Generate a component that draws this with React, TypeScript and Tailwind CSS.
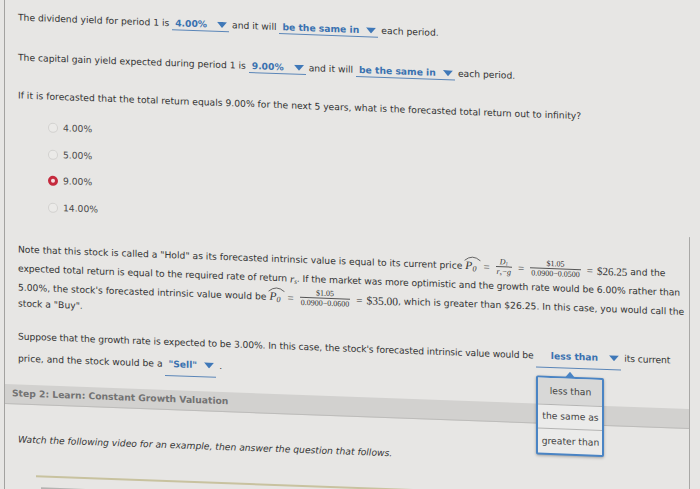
import React from 'react';

const serif = "font-['Liberation_Serif',serif]";

function Caret() {
  return (
    <svg width="10" height="6" viewBox="0 0 10 6" className="shrink-0">
      <path d="M0 0h10L5 6z" fill="#3f78b8" />
    </svg>
  );
}

function Dropdown({
  value,
  w,
  center,
  children,
}: {
  value: string;
  w: string;
  center?: boolean;
  children?: React.ReactNode;
}) {
  return (
    <span
      className={`relative inline-flex items-center ${w} border-b border-[#5b86b8] pl-[3px] pr-[2px] font-bold tracking-normal text-[#3a72b0]`}
    >
      <span className={center ? 'flex-1 text-center' : 'flex-1'}>{value}</span>
      <Caret />
      {children}
    </span>
  );
}

function Radio({ label, checked }: { label: string; checked?: boolean }) {
  return (
    <div className="flex h-[12px] items-center pl-[30px]">
      <span
        className={
          checked
            ? 'size-[10px] rounded-full border-[3px] border-[#c52a3d] bg-[#f3dde0]'
            : 'size-[10px] rounded-full border border-[#d2d1cf] bg-[#ebeae8]'
        }
      />
      <span className="ml-[5px] text-[#4a4a4a]">{label}</span>
    </div>
  );
}

function PHat() {
  return (
    <span className={`relative mx-[3px] inline-block ${serif} text-[11.5px] italic leading-none text-[#333]`}>
      P<sub className="text-[8px]">0</sub>
      <svg className="absolute -top-[5px] -left-[1px]" width="17" height="6" viewBox="0 0 17 6">
        <path d="M0.5 5.5 Q8.5 -1.5 16.5 5.5" stroke="#444" fill="none" strokeWidth="0.8" />
      </svg>
    </span>
  );
}

function Frac({ num, den }: { num: React.ReactNode; den: React.ReactNode }) {
  return (
    <span className={`mx-[2px] inline-flex flex-col items-center align-middle ${serif} text-[8px] leading-[9px] text-[#333]`}>
      <span className="px-[1px]">{num}</span>
      <span className="border-t border-[#555] px-[1px]">{den}</span>
    </span>
  );
}

function Eq() {
  return <span className={`${serif} mx-[4px] text-[11px]`}>=</span>;
}

function Popup() {
  return (
    <span className="absolute top-[calc(100%+9px)] left-0 z-10 flex w-[68px] flex-col rounded-[2px] border-2 border-[#4a84c4] bg-[#ebebea] text-center font-normal text-[#444] shadow-[0_1px_3px_rgba(0,0,0,0.3)]">
      <svg className="absolute -top-[7px] left-[27px]" width="10" height="6" viewBox="0 0 10 6">
        <path d="M0 6L5 0l5 6z" fill="#4a84c4" />
      </svg>
      <span className="flex h-[26px] items-center justify-center bg-[#d8d8d7]">less than</span>
      <span className="flex h-[24px] items-center justify-center border-t border-[#b4b4b3]">the same as</span>
      <span className="flex h-[25px] items-center justify-center border-t border-[#b4b4b3]">greater than</span>
    </span>
  );
}

export default function App() {
  return (
    <div className="h-[489px] w-[700px] overflow-hidden bg-[#e7e6e4] pl-[4px] font-['DejaVu_Sans',sans-serif] text-[9.2px] leading-[12px] text-[#363636]">
      <div className="w-[686px] origin-top-left skew-y-[2.1deg] border-l border-[#a3a2a0] pt-[11px]">
        <div className="h-[12px] whitespace-nowrap pl-[13px]">
          The dividend yield for period 1 is <Dropdown value="4.00%" w="w-[57px]" /> and it will{' '}
          <Dropdown value="be the same in" w="w-[99px]" /> each period.
        </div>
        <div className="mt-[28px] h-[12px] whitespace-nowrap pl-[13px]">
          The capital gain yield expected during period 1 is <Dropdown value="9.00%" w="w-[57px]" /> and it will{' '}
          <Dropdown value="be the same in" w="w-[99px]" /> each period.
        </div>
        <div className="mt-[26px] h-[12px] whitespace-nowrap pl-[13px]">
          If it is forecasted that the total return equals 9.00% for the next 5 years, what is the forecasted total
          return out to infinity?
        </div>

        <div className="mt-[19px] flex flex-col gap-[14.5px] pl-[13px]">
          <Radio label="4.00%" />
          <Radio label="5.00%" />
          <Radio label="9.00%" checked />
          <Radio label="14.00%" />
        </div>

        <div className="border-r border-[#a9a8a6]">
          <div className="whitespace-nowrap pt-[28px] pl-[13px]">
            <div className="flex h-[18px] items-center">
              <span>
                Note that this stock is called a "Hold" as its forecasted intrinsic value is equal to its current price
              </span>
              <PHat />
              <Eq />
              <Frac
                num={
                  <i>
                    D<sub className="text-[5px]">1</sub>
                  </i>
                }
                den={
                  <i>
                    r<sub className="text-[5px]">s</sub>−g
                  </i>
                }
              />
              <Eq />
              <Frac num="$1.05" den="0.0900−0.0500" />
              <Eq />
              <span className={`${serif} text-[11px]`}>$26.25</span>
              <span>&nbsp;and the</span>
            </div>
            <div className="flex h-[20px] items-center tracking-[-0.05px]">
              <span>expected total return is equal to the required rate of return&nbsp;</span>
              <span className={`${serif} text-[11px] italic`}>
                r<sub className="text-[7px]">s</sub>
              </span>
              <span>. If the market was more optimistic and the growth rate would be 6.00% rather than</span>
            </div>
            <div className="flex h-[18px] items-center">
              <span>5.00%, the stock's forecasted intrinsic value would be</span>
              <PHat />
              <Eq />
              <Frac num="$1.05" den="0.0900−0.0600" />
              <Eq />
              <span className={`${serif} text-[11.5px]`}>$35.00</span>
              <span>, which is greater than $26.25. In this case, you would call the</span>
            </div>
            <div className="flex h-[14px] items-center">stock a "Buy".</div>
          </div>

          <div className="mt-[15px] whitespace-nowrap pl-[13px]">
            <div className="h-[22px] leading-[22px] tracking-[-0.1px]">
              Suppose that the growth rate is expected to be 3.00%. In this case, the stock's forecasted intrinsic value
              would be{' '}
              <Dropdown value="less than" w="w-[85px]" center>
                <Popup />
              </Dropdown>{' '}
              its current
            </div>
            <div className="h-[22px] leading-[22px]">
              price, and the stock would be a <Dropdown value={'"Sell"'} w="w-[51px]" /> .
            </div>
          </div>

          <div className="mt-[15px] flex h-[20px] items-center border-b border-[#bdbcba] bg-[#d2d1cf] pl-[7px] font-bold text-[#737373]">
            Step 2: Learn: Constant Growth Valuation
          </div>

          <div className="mt-[29px] h-[12px] whitespace-nowrap pl-[13px] italic">
            Watch the following video for an example, then answer the question that follows.
          </div>

          <div className="mt-[29px] ml-[31px] h-[2px] w-[392px] bg-[#c8c29f]" />
          <div className="mt-[10px] ml-[36px] h-[10px] w-[360px] bg-[#b3b3b1]" />
        </div>
      </div>
    </div>
  );
}
